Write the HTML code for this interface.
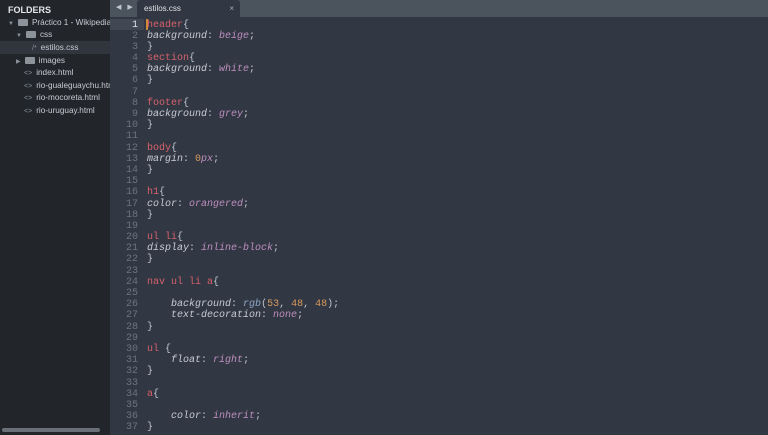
<!DOCTYPE html>
<html><head><meta charset="utf-8"><style>
*{margin:0;padding:0;box-sizing:border-box}
body{width:768px;height:435px;overflow:hidden;background:#313843;font-family:"Liberation Sans",sans-serif;position:relative}
#side{position:absolute;left:0;top:0;width:110px;height:435px;background:#22262b;color:#c8ccd2;font-size:8.2px;overflow:hidden}
#side .h{position:absolute;left:8px;top:5px;font-weight:bold;font-size:9px;color:#e6e8eb}
#side .r{position:absolute;height:12px;line-height:12px;white-space:nowrap}
#side .sel{position:absolute;left:0;top:41px;width:110px;height:13px;background:#30353e}
.ic{color:#8a9099;font-size:7px;margin-right:4px}
.fold{display:inline-block;width:10px;height:7px;background:#8d939b;border-radius:1px;margin-right:4px;vertical-align:-1px}
.tri{color:#8a9099;font-size:6px;margin-right:4px}
#sb{position:absolute;left:2px;top:428px;width:98px;height:4px;background:#6a7078;border-radius:2px}
#tabs{position:absolute;left:110px;top:0;width:658px;height:17px;background:#4b535d}
#arr{position:absolute;left:116px;top:3px;color:#c0c5cc;font-size:7px;letter-spacing:2px}
#tab{position:absolute;left:137px;top:0;width:103px;height:18px;background:#313843;border-radius:3px 3px 0 0;color:#dfe2e6;font-size:8px;line-height:18px;padding-left:7px}
#tab span{position:absolute;right:6px;top:0;color:#aab0b7}
#gut{position:absolute;left:110px;top:19.5px;width:28px;text-align:right;font-family:"Liberation Mono",monospace;font-size:10px;line-height:11.2px;color:#6c7480}
#gut div,#code div{height:11.2px}
#hl{position:absolute;left:110px;top:18.5px;width:34px;height:11.5px;background:#404854}
#cur{position:absolute;left:146px;top:19px;width:1.5px;height:11px;background:#d08a3a}
#code{position:absolute;left:147px;top:19.5px;font-family:"Liberation Mono",monospace;font-size:10px;line-height:11.2px;color:#c0c5ce;white-space:pre}
.s{color:#d8606b}.p{font-style:italic;color:#c8ccd4}.v{font-style:italic;color:#c08fc0}.n{color:#d99a5e}.f{color:#8fa8c8;font-style:italic}
</style></head><body>
<div id="side">
<div class="h">FOLDERS</div>
<div class="sel"></div>
<div class="r" style="left:8px;top:17px"><span class="tri">▼</span><span class="fold"></span>Práctico 1 - Wikipedia</div>
<div class="r" style="left:16px;top:29px"><span class="tri">▼</span><span class="fold"></span>css</div>
<div class="r" style="left:32px;top:42px"><span class="ic">/*</span>estilos.css</div>
<div class="r" style="left:16px;top:55px"><span class="tri">▶</span><span class="fold"></span>images</div>
<div class="r" style="left:24px;top:67px"><span class="ic">&lt;&gt;</span>index.html</div>
<div class="r" style="left:24px;top:80px"><span class="ic">&lt;&gt;</span>rio-gualeguaychu.html</div>
<div class="r" style="left:24px;top:92px"><span class="ic">&lt;&gt;</span>rio-mocoreta.html</div>
<div class="r" style="left:24px;top:105px"><span class="ic">&lt;&gt;</span>rio-uruguay.html</div>
<div id="sb"></div>
</div>
<div id="tabs"></div>
<div id="arr">◀ ▶</div>
<div id="tab">estilos.css<span>×</span></div>
<div id="hl"></div>
<div id="gut"><div style="color:#dfe3e8">1</div><div>2</div><div>3</div><div>4</div><div>5</div><div>6</div><div>7</div><div>8</div><div>9</div><div>10</div><div>11</div><div>12</div><div>13</div><div>14</div><div>15</div><div>16</div><div>17</div><div>18</div><div>19</div><div>20</div><div>21</div><div>22</div><div>23</div><div>24</div><div>25</div><div>26</div><div>27</div><div>28</div><div>29</div><div>30</div><div>31</div><div>32</div><div>33</div><div>34</div><div>35</div><div>36</div><div>37</div></div>
<div id="cur"></div>
<div id="code"><div><span class="s">header</span>{</div><div><span class="p">background</span>: <span class="v">beige</span>;</div><div>}</div><div><span class="s">section</span>{</div><div><span class="p">background</span>: <span class="v">white</span>;</div><div>}</div><div></div><div><span class="s">footer</span>{</div><div><span class="p">background</span>: <span class="v">grey</span>;</div><div>}</div><div></div><div><span class="s">body</span>{</div><div><span class="p">margin</span>: <span class="n">0</span><span class="v">px</span>;</div><div>}</div><div></div><div><span class="s">h1</span>{</div><div><span class="p">color</span>: <span class="v">orangered</span>;</div><div>}</div><div></div><div><span class="s">ul li</span>{</div><div><span class="p">display</span>: <span class="v">inline-block</span>;</div><div>}</div><div></div><div><span class="s">nav ul li a</span>{</div><div></div><div>    <span class="p">background</span>: <span class="f">rgb</span>(<span class="n">53</span>, <span class="n">48</span>, <span class="n">48</span>);</div><div>    <span class="p">text-decoration</span>: <span class="v">none</span>;</div><div>}</div><div></div><div><span class="s">ul</span> {</div><div>    <span class="p">float</span>: <span class="v">right</span>;</div><div>}</div><div></div><div><span class="s">a</span>{</div><div></div><div>    <span class="p">color</span>: <span class="v">inherit</span>;</div><div>}</div></div>
</body></html>
